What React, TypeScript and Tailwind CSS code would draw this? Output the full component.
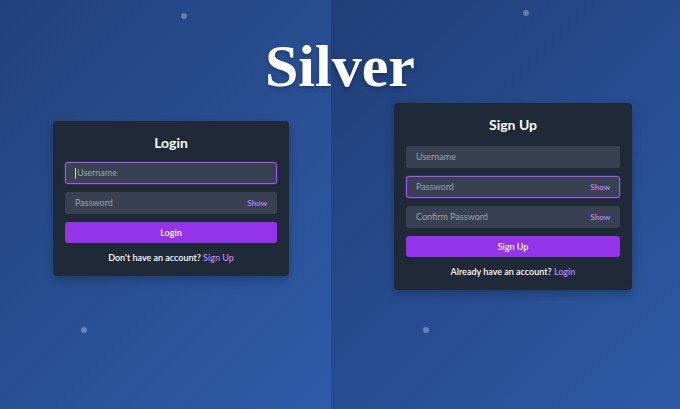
import React from "react";

const Dot = ({ className }: { className: string }) => (
  <div className={`absolute w-[6px] h-[6px] rounded-full bg-white/30 ${className}`} />
);

const Field = ({
  placeholder,
  show,
  focused,
  caret,
}: {
  placeholder: string;
  show?: boolean;
  focused?: boolean;
  caret?: boolean;
}) => (
  <div
    className={`flex items-center justify-between h-[22px] rounded-[3px] bg-[#374151] pl-[9px] pr-[9px] ${
      focused
        ? "border-[1.5px] border-[#a855f7] shadow-[0_0_2px_rgba(168,85,247,0.6)]"
        : "border-[1.5px] border-transparent"
    }`}
  >
    <span className="flex items-center text-[9px] text-[#9ca3af]">
      {caret && <span className="w-px h-[11px] bg-[#d1d5db] mr-px" />}
      {placeholder}
    </span>
    {show && <span className="text-[8px] font-semibold text-[#c084fc]">Show</span>}
  </div>
);

const Card = ({
  title,
  children,
  question,
  link,
  top,
}: {
  title: string;
  children: React.ReactNode;
  question: string;
  link: string;
  top: string;
}) => (
  <div className="rounded-[4px] bg-[#1f2937] px-3 pt-3 pb-[12px] shadow-[0_4px_10px_rgba(0,0,0,0.25)]">
    <h2 className="text-center text-[14px] leading-[20px] font-bold text-white">{title}</h2>
    <div className={`flex flex-col gap-[8px] ${top}`}>{children}</div>
    <div className="mt-[8px] h-[13px] leading-[13px] text-center text-[9px] font-semibold text-white">
      {question} <span className="text-[#c084fc]">{link}</span>
    </div>
  </div>
);

const Button = ({ label }: { label: string }) => (
  <div className="flex items-center justify-center h-[21px] rounded-[3px] bg-[#9333ea] text-[9px] font-semibold text-white">
    {label}
  </div>
);

export default function App() {
  return (
    <div
      className="relative w-[680px] h-[409px] overflow-hidden grid grid-cols-[331px_349px]"
      style={{ fontFamily: "Lato, 'Noto Sans', sans-serif" }}
    >
      {/* Left screenshot */}
      <div className="relative bg-[linear-gradient(135deg,#22417b,#2e5ca9)] pl-[53px] pt-[121px]">
        <div className="w-[236px]">
          <Card title="Login" question="Don't have an account?" link="Sign Up" top="mt-[9px]">
            <Field placeholder="Username" focused caret />
            <Field placeholder="Password" show />
            <Button label="Login" />
          </Card>
        </div>
      </div>

      {/* Right screenshot */}
      <div className="relative bg-[linear-gradient(135deg,#203e77,#2d5aa7)] pl-[63px] pt-[103px]">
        <div className="w-[238px]">
          <Card title="Sign Up" question="Already have an account?" link="Login" top="mt-[11px]">
            <Field placeholder="Username" />
            <Field placeholder="Password" show focused />
            <Field placeholder="Confirm Password" show />
            <Button label="Sign Up" />
          </Card>
        </div>
      </div>

      <Dot className="left-[181px] top-[13px]" />
      <Dot className="left-[523px] top-[10px]" />
      <Dot className="left-[81px] top-[327px]" />
      <Dot className="left-[423px] top-[327px]" />

      <h1
        className="absolute left-0 right-0 top-[30px] text-center text-[60px] leading-[72px] font-bold text-white [text-shadow:0_2px_4px_rgba(0,0,0,0.3)]"
        style={{ fontFamily: "'Liberation Serif', serif" }}
      >
        Silver
      </h1>
    </div>
  );
}
